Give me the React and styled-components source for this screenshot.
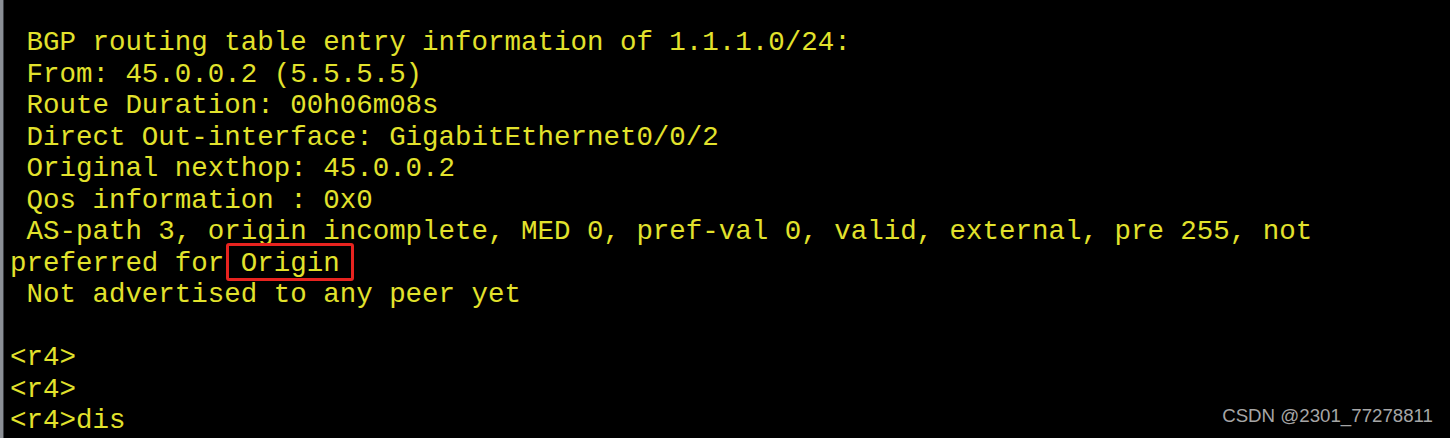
import React from 'react';
import styled, { createGlobalStyle } from 'styled-components';

const GlobalStyle = createGlobalStyle`
  html, body {
    margin: 0;
    padding: 0;
    background: #000;
  }
`

const Screen = styled.div`
  position: relative;
  height: 100vh;
  overflow: hidden;
  background: #000;
  border-left: 3px solid #8b8f95;
  box-shadow: inset 1px 0 0 #3c3f44;
  box-sizing: border-box;
`

const Output = styled.pre`
  margin: 0;
  padding: 27px 0 0 7px;
  font-family: "Liberation Mono", "Courier New", monospace;
  font-size: 27.48px;
  line-height: 31.5px;
  color: #e2e22c;
  white-space: pre;
`

const Marked = styled.span`
  position: relative;
  &::after {
    content: "";
    position: absolute;
    left: 2px;
    top: -5px;
    width: 128px;
    height: 38px;
    border: 3px solid #e8231f;
    border-radius: 3px;
    box-sizing: border-box;
  }
`

const Watermark = styled.div`
  position: absolute;
  right: 17px;
  bottom: 11px;
  font-family: "Liberation Sans", Arial, sans-serif;
  font-size: 18.7px;
  color: #a6a6a6;
`

const lines = [
  ' BGP routing table entry information of 1.1.1.0/24:',
  ' From: 45.0.0.2 (5.5.5.5)',
  ' Route Duration: 00h06m08s',
  ' Direct Out-interface: GigabitEthernet0/0/2',
  ' Original nexthop: 45.0.0.2',
  ' Qos information : 0x0',
  ' AS-path 3, origin incomplete, MED 0, pref-val 0, valid, external, pre 255, not',
];

const tail = [
  ' Not advertised to any peer yet',
  '',
  '<r4>',
  '<r4>',
  '<r4>dis',
];

const App = () => {
  return (
    <Screen>
      <GlobalStyle />
      <Output>
        {lines.join('\n') + '\n'}
        preferred for<Marked> Origin</Marked>
        {'\n' + tail.join('\n')}
      </Output>
      <Watermark>CSDN @2301_77278811</Watermark>
    </Screen>
  );
};

export default App;
